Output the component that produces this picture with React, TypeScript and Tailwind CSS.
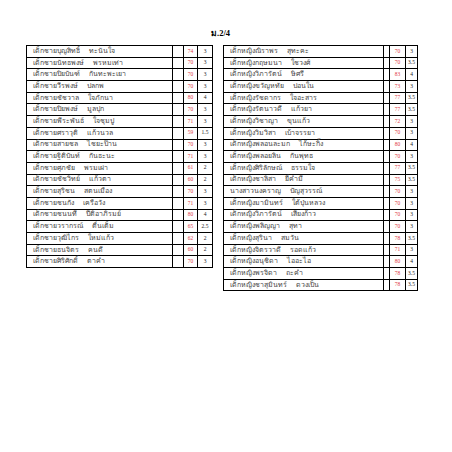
import React from "react";

type Row = [string, string, string, string];

const boys: Row[] = [
  ["เด็กชายบุญสิทธิ์", "ทะนันใจ", "74", "3"],
  ["เด็กชายนัทธพงษ์", "พรหมเท่า", "70", "3"],
  ["เด็กชายปิยบันฑ์", "กันทะพะเยา", "70", "3"],
  ["เด็กชายวีรพงษ์", "ปลกพ", "70", "3"],
  ["เด็กชายชัชวาล", "ใจภักนา", "80", "4"],
  ["เด็กชายปิยพงษ์", "มูลปุก", "70", "3"],
  ["เด็กชายพีระพันธ์", "ใจชุมปู", "71", "3"],
  ["เด็กชายศราวุติ", "แก้วนวล", "59", "1.5"],
  ["เด็กชายสายชล", "ไชยะป๊าน", "70", "3"],
  ["เด็กชายฐิติบันท์", "กันธะนะ", "71", "3"],
  ["เด็กชายศุภชัย", "พรมเผ่า", "61", "2"],
  ["เด็กชายชัชวิทย์", "แก้วตา", "60", "2"],
  ["เด็กชายสุริชน", "สตนเมือง", "70", "3"],
  ["เด็กชายชนกัง", "เครือวัง", "71", "3"],
  ["เด็กชายชนนที", "ปีติอาภิรมย์", "80", "4"],
  ["เด็กชายวรากรณ์", "ตื่นเต็ม", "65", "2.5"],
  ["เด็กชายวุฒิไกร", "ใหม่แก้ว", "62", "2"],
  ["เด็กชายธนจิตร", "คนดี", "60", "2"],
  ["เด็กชายศิริศักดิ์", "ตาคำ", "70", "3"],
];

const girls: Row[] = [
  ["เด็กหญิงณิราพร", "สุทะคะ", "70", "3"],
  ["เด็กหญิงกฤษมนา", "ใชวงศ์", "70", "3.5"],
  ["เด็กหญิงวิภารัตน์", "ษิศรี", "83", "4"],
  ["เด็กหญิงขวัญหทัย", "ปอนใน", "73", "3"],
  ["เด็กหญิงรัชดากร", "ใจอะสาร", "77", "3.5"],
  ["เด็กหญิงรัตนาวดี", "แก้วยา", "77", "3.5"],
  ["เด็กหญิงวิชาญา", "ขุนแก้ว", "72", "3"],
  ["เด็กหญิงวิมวิสา", "เบ้าจรรยา", "70", "3"],
  ["เด็กหญิงพลอนละมก", "ไก้ษะกิ้ง", "80", "4"],
  ["เด็กหญิงพลอยลิน", "กันพุทธ", "70", "3"],
  ["เด็กหญิงศิริลักษณ์", "ธรรมใจ", "77", "3.5"],
  ["เด็กหญิงชาลิสา", "ยี่คำมี", "75", "3.5"],
  ["นางสาวนงคราญ", "ปัญสุวรรณ์", "70", "3"],
  ["เด็กหญิงมามินทร์", "ใต้ปุ่นหลวง", "70", "3"],
  ["เด็กหญิงวิภารัตน์", "เสียงก้าว", "70", "3"],
  ["เด็กหญิงพลิญญา", "สุทา", "70", "3"],
  ["เด็กหญิงสุรินา", "สมวัน", "78", "3.5"],
  ["เด็กหญิงจิตรวาดี", "รอดแก้ว", "71", "3"],
  ["เด็กหญิงอนุชิดา", "ไออะไอ", "80", "4"],
  ["เด็กหญิงพรจิดา", "ถะคำ", "78", "3.5"],
  ["เด็กหญิงชาสุมินทร์", "ดวงเป็น", "78", "3.5"],
];

function ScoreTable({ rows, nameW, blankW, scoreW, gradeW }: { rows: Row[]; nameW: string; blankW: string; scoreW: string; gradeW: string }) {
  return (
    <table className="border-collapse border border-black">
      <tbody>
        {rows.map(([first, last, score, grade], i) => (
          <tr key={i} className="h-[11.7px]">
            <td className={`${nameW} border border-black pl-[6px] text-[7px] leading-none text-[#444] whitespace-nowrap`}>
              <span>{first}</span>
              <span className="ml-[9px]">{last}</span>
            </td>
            <td className={`${blankW} border border-black`}></td>
            <td className={`${scoreW} border border-black text-center text-[5.5px] leading-none text-[#e0404a]`}>{score}</td>
            <td className={`${gradeW} border border-black text-center text-[5.5px] leading-none text-[#222]`}>{grade}</td>
          </tr>
        ))}
      </tbody>
    </table>
  );
}

export default function App() {
  return (
    <main
      className="w-[452px] h-[452px] bg-white relative"
      style={{ fontFamily: '"Liberation Serif", "DejaVu Serif", "Noto Sans", serif' }}
    >
      <div className="pt-[28px] pl-[26px]">
        <div className="pl-[185px] h-[19px] text-[8.5px] leading-none font-bold text-black pt-[1px]">ม.2/4</div>
        <div className="flex items-start gap-[10px] -mt-[2px]">
          <ScoreTable rows={boys} nameW="w-[146px]" blankW="w-[11px]" scoreW="w-[14px]" gradeW="w-[15px]" />
          <ScoreTable rows={girls} nameW="w-[160px]" blankW="w-[6px]" scoreW="w-[16px]" gradeW="w-[12px]" />
        </div>
      </div>
    </main>
  );
}
